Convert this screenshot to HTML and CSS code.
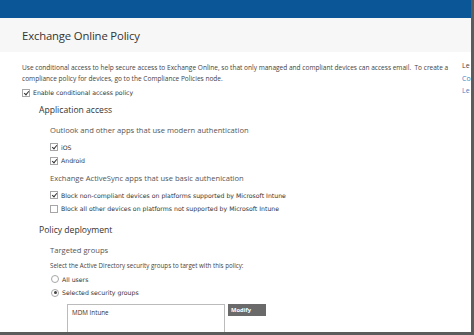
FILE: index.html
```html
<html>

<head>
	<meta charset="utf-8">
	<link rel="stylesheet" href="styles.css">
</head>

<body>

	<div class="window">
		<div class="topbar"></div>

		<div class="header">
			<h1>Exchange Online Policy</h1>
		</div>

		<div class="content">
			<div class="main">
				<p class="intro">Use conditional access to help secure access to Exchange Online, so that only managed and compliant devices can access email.&nbsp; To create a compliance policy for devices, go to the Compliance Policies node.</p>

				<label class="check"><span class="box on"></span>Enable conditional access policy</label>

				<h2>Application access</h2>
				<div class="group">
					<h3>Outlook and other apps that use modern authentication</h3>
					<label class="check"><span class="box on"></span>iOS</label>
					<label class="check"><span class="box on"></span>Android</label>

					<h3>Exchange ActiveSync apps that use basic authenication</h3>
					<label class="check"><span class="box on"></span>Block non-compliant devices on platforms supported by Microsoft Intune</label>
					<label class="check"><span class="box"></span>Block all other devices on platforms not supported by Microsoft Intune</label>
				</div>

				<h2 class="spaced">Policy deployment</h2>
				<div class="group">
					<h3>Targeted groups</h3>
					<p class="hint">Select the Active Directory security groups to target with this policy:</p>
					<label class="radio"><span class="dot"></span>All users</label>
					<label class="radio"><span class="dot on"></span>Selected security groups</label>

					<div class="picker">
						<div class="listbox">MDM Intune</div>
						<span class="btn">Modify</span>
					</div>
				</div>
			</div>

			<div class="side">
				<span class="plain">Le</span>
				<span class="link">Co</span>
				<span class="link">Le</span>
			</div>
		</div>
	</div>

</body>

</html>
```

FILE: styles.css
```css
* {
	box-sizing: border-box;
}

html,
body {
	margin: 0;
	height: 100%;
	background: #5c5c5c;
	overflow: hidden;
}

body {
	font-family: "Open Sans", "DejaVu Sans", sans-serif;
	color: #444;
}

.window {
	width: 471px;
	height: 332px;
	background: #fff;
	overflow: hidden;
}

.topbar {
	height: 18px;
	background: #0b5696;
}

.header {
	height: 34px;
	background: #f7f7f7;
	padding-left: 22px;
	display: flex;
	align-items: center;
}

h1 {
	margin: 0;
	font-weight: normal;
	font-size: 11.3px;
	letter-spacing: -0.15px;
	color: #333;
}

.content {
	display: flex;
	padding-top: 10px;
}

.main {
	width: 452px;
	padding-left: 22px;
}

.intro {
	margin: 0 0 2px;
	font-size: 6.55px;
	line-height: 11px;
	color: #444;
}

.check,
.radio {
	display: flex;
	align-items: center;
	height: 13.5px;
	font-family: "DejaVu Sans", sans-serif;
	font-size: 6.2px;
	color: #333;
}

.box {
	flex: none;
	width: 8px;
	height: 8px;
	border: 1px solid #a6a6a6;
	background: #fff;
	margin-right: 3px;
	position: relative;
}

.box.on::after {
	content: "";
	position: absolute;
	left: 2px;
	top: 0;
	width: 2px;
	height: 4px;
	border: solid #333;
	border-width: 0 1px 1px 0;
	transform: rotate(40deg);
}

h2 {
	margin: 3px 0 0 17px;
	font-weight: normal;
	font-size: 8.6px;
	line-height: 14px;
	color: #333;
}

h2.spaced {
	margin-top: 7px;
}

.group {
	padding-left: 28px;
}

h3 {
	margin: 8px 0 6px;
	font-weight: normal;
	font-size: 7.6px;
	line-height: 10px;
	color: #555;
}

.check + h3 {
	margin-top: 5px;
}

.spaced + .group h3 {
	margin-top: 8px;
}

.hint {
	margin: 5px 0 2px;
	font-size: 6.2px;
	line-height: 10px;
	color: #444;
}

.radio {
	padding-left: 1px;
}

.dot {
	flex: none;
	width: 8px;
	height: 8px;
	border: 1px solid #a6a6a6;
	border-radius: 50%;
	margin-right: 3px;
	display: flex;
	align-items: center;
	justify-content: center;
}

.dot.on::after {
	content: "";
	width: 3px;
	height: 3px;
	border-radius: 50%;
	background: #444;
}

.picker {
	display: flex;
	align-items: flex-start;
	gap: 3px;
	margin: 4px 0 0 17px;
}

.listbox {
	width: 158px;
	height: 40px;
	border: 1px solid #bbb;
	padding: 3px 4px;
	font-size: 6.3px;
	color: #333;
}

.btn {
	width: 38px;
	height: 12px;
	background: #6a6a6a;
	color: #fff;
	font-size: 5.8px;
	font-weight: bold;
	display: flex;
	align-items: center;
	padding-left: 3px;
}

.side {
	display: flex;
	flex-direction: column;
	margin-top: -2px;
	padding-left: 10px;
	font-size: 7px;
	line-height: 12.5px;
}

.side .plain {
	color: #444;
}

.side .link {
	color: #3f7fc4;
}
```
